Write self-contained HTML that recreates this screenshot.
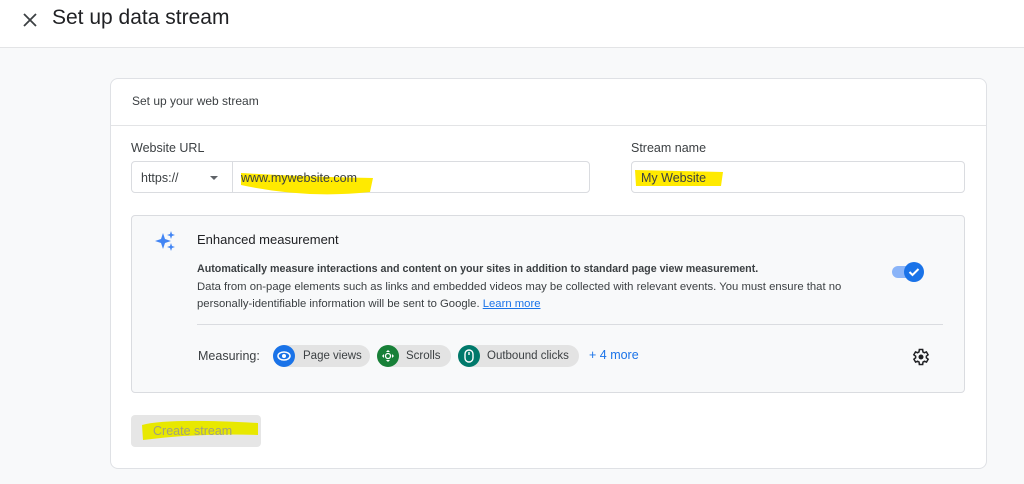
<!DOCTYPE html>
<html><head><style>
*{box-sizing:border-box;margin:0;padding:0}
body{width:1024px;height:484px;overflow:hidden;background:#f8f9fa;font-family:"Liberation Sans",Arial,sans-serif;color:#202124;position:relative}
.abs{position:absolute}
.hdr{left:0;top:0;width:1024px;height:48px;background:#fff;border-bottom:1px solid #e3e4e6}
.card{left:110px;top:78px;width:877px;height:391px;background:#fff;border:1px solid #dfe1e5;border-radius:8px}
.input{border:1px solid #dadce0;border-radius:4px;background:#fff}
.em{left:131px;top:215px;width:834px;height:178px;background:#f8f9fa;border:1px solid #dadce0;border-radius:4px}
.chip{position:absolute;top:345px;height:22px;border-radius:11px;background:#e3e3e3;font-size:11.5px;color:#3c4043;line-height:22px}
.ci{position:absolute;left:0;top:0;width:22px;height:22px;border-radius:50%}
</style></head><body>
<div class="abs hdr"></div>
<svg class="abs" style="left:22px;top:12px" width="16" height="16" viewBox="0 0 16 16"><path d="M2 2L14 14M14 2L2 14" stroke="#3c4043" stroke-width="1.8"/></svg>
<div class="abs" style="left:52px;top:6px;font-size:21px;color:#202124">Set up data stream</div>
<div class="abs card"></div>
<div class="abs" style="left:132px;top:94px;font-size:12px;color:#3c4043">Set up your web stream</div>
<div class="abs" style="left:111px;top:125px;width:875px;height:1px;background:#e3e4e6"></div>
<div class="abs" style="left:131px;top:141px;font-size:12.5px;color:#3c4043">Website URL</div>
<div class="abs input" style="left:131px;top:161px;width:459px;height:32px"></div>
<div class="abs" style="left:232px;top:162px;width:1px;height:30px;background:#dadce0"></div>
<div class="abs" style="left:141px;top:171px;font-size:12.5px;color:#3c4043">https://</div>
<div class="abs" style="left:210px;top:176px;width:0;height:0;border-left:4px solid transparent;border-right:4px solid transparent;border-top:4px solid #5f6368"></div>
<svg class="abs" style="left:236px;top:165px" width="145" height="36"><path d="M5 8 Q70 12 137 13 L134 27 Q70 34 5 20 Z" fill="#ffea00"/></svg>
<div class="abs" style="left:241px;top:171px;font-size:12.5px;color:#3c4043">www.mywebsite.com</div>
<div class="abs" style="left:631px;top:141px;font-size:12.5px;color:#3c4043">Stream name</div>
<div class="abs input" style="left:631px;top:161px;width:334px;height:32px"></div>
<svg class="abs" style="left:633px;top:166px" width="95" height="24"><path d="M2 4 L90 6 L88 20 L3 20 Z" fill="#ffea00"/></svg>
<div class="abs" style="left:641px;top:171px;font-size:12.5px;color:#3c4043">My Website</div>
<div class="abs em"></div>
<svg class="abs" style="left:154px;top:230px" width="22" height="22" viewBox="0 0 22 22"><path d="M7 3 L9 9 L15 11 L9 13 L7 19 L5 13 L-1 11 L5 9Z" fill="#4285f4" transform="translate(2,0)"/><path d="M17 1 L18 4 L21 5 L18 6 L17 9 L16 6 L13 5 L16 4Z" fill="#4285f4"/><path d="M17 13 L18 16 L21 17 L18 18 L17 21 L16 18 L13 17 L16 16Z" fill="#4285f4"/></svg>
<div class="abs" style="left:197px;top:232px;font-size:13px;color:#202124">Enhanced measurement</div>
<div class="abs" style="left:197px;top:261px;font-size:11.3px;line-height:17.5px;color:#3c4043;width:660px"><b style="color:#3c4043;font-size:10.7px">Automatically measure interactions and content on your sites in addition to standard page view measurement.</b><br>Data from on-page elements such as links and embedded videos may be collected with relevant events. You must ensure that no personally-identifiable information will be sent to Google. <span style="color:#1a73e8;text-decoration:underline">Learn more</span></div>
<div class="abs" style="left:892px;top:266px;width:28px;height:12px;border-radius:6px;background:#8ab4f8"></div>
<div class="abs" style="left:904px;top:262px;width:20px;height:20px;border-radius:50%;background:#1a73e8"></div>
<svg class="abs" style="left:904px;top:262px" width="20" height="20"><path d="M5.5 10 L8.5 13 L14.5 7" stroke="#fff" stroke-width="2" fill="none"/></svg>
<div class="abs" style="left:197px;top:324px;width:746px;height:1px;background:#dadce0"></div>
<div class="abs" style="left:198px;top:349px;font-size:12.5px;color:#3c4043">Measuring:</div>
<div class="chip" style="left:273px;width:97px"><div class="ci" style="background:#1a73e8"></div><svg class="abs" style="left:4px;top:6px" width="14" height="10"><ellipse cx="7" cy="5" rx="6" ry="4" fill="none" stroke="#fff" stroke-width="1.5"/><circle cx="7" cy="5" r="2" fill="#fff"/></svg><span style="position:absolute;left:30px">Page views</span></div>
<div class="chip" style="left:377px;width:74px"><div class="ci" style="background:#188038"></div><svg class="abs" style="left:4px;top:4px" width="14" height="14"><path d="M7 1L9 3H5ZM7 13L9 11H5ZM1 7L3 5V9ZM13 7L11 5V9Z" fill="#fff"/><circle cx="7" cy="7" r="2.5" fill="none" stroke="#fff" stroke-width="1.3"/></svg><span style="position:absolute;left:29px">Scrolls</span></div>
<div class="chip" style="left:458px;width:121px"><div class="ci" style="background:#00796b"></div><svg class="abs" style="left:6px;top:4px" width="10" height="14"><rect x="1" y="1" width="8" height="12" rx="4" fill="none" stroke="#fff" stroke-width="1.4"/><path d="M5 3V6" stroke="#fff" stroke-width="1.4"/></svg><span style="position:absolute;left:29px">Outbound clicks</span></div>
<div class="abs" style="left:589px;top:348px;font-size:12.5px;color:#1a73e8">+ 4 more</div>
<svg class="abs" style="left:911px;top:347px" width="20" height="20" viewBox="0 0 24 24"><path d="M19.4 13a7.5 7.5 0 000-2l2.1-1.6-2-3.5-2.5 1a7 7 0 00-1.7-1L15 3h-4l-.4 2.9a7 7 0 00-1.7 1l-2.5-1-2 3.5L6.6 11a7.5 7.5 0 000 2l-2.1 1.6 2 3.5 2.5-1a7 7 0 001.7 1L11 21h4l.4-2.9a7 7 0 001.7-1l2.5 1 2-3.5z" fill="none" stroke="#202124" stroke-width="1.8" transform="translate(-1,0)"/><circle cx="12" cy="12" r="3" fill="#202124"/></svg>
<div class="abs" style="left:131px;top:415px;width:130px;height:32px;border-radius:4px;background:#e6e6e6"></div>
<svg class="abs" style="left:138px;top:415px" width="125" height="28"><path d="M4 10 Q30 3 120 8 L120 20 Q60 18 5 25 Z" fill="#e8e800"/></svg>
<div class="abs" style="left:153px;top:424px;font-size:12.5px;color:#a0a080">Create stream</div>
</body></html>
